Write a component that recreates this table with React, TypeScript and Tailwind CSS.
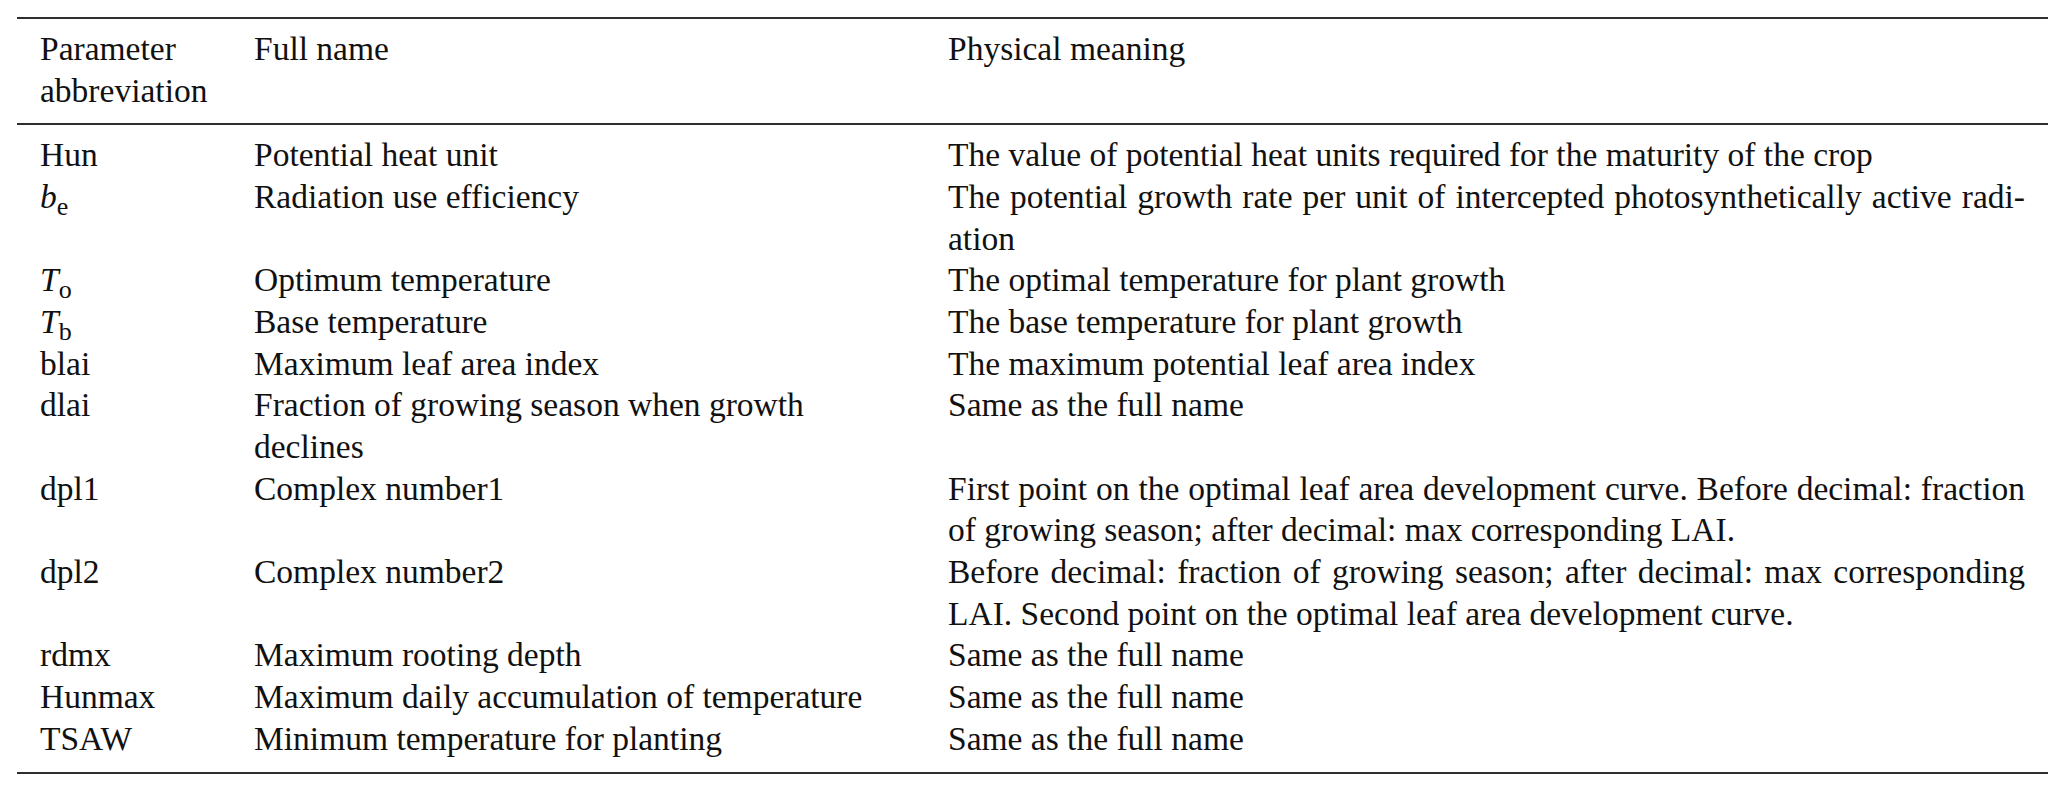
import React from 'react';

type Line = { text: React.ReactNode; justify?: boolean };

type Row = {
  abbr: React.ReactNode;
  name: Line[];
  meaning: Line[];
};

const Sub: React.FC<{ base: string; sub: string }> = ({ base, sub }) => (
  <span>
    <i>{base}</i>
    <span className="relative top-[7px] text-[26px] leading-none">{sub}</span>
  </span>
);

const rows: Row[] = [
  {
    abbr: 'Hun',
    name: [{ text: 'Potential heat unit' }],
    meaning: [{ text: 'The value of potential heat units required for the maturity of the crop' }]
  },
  {
    abbr: <Sub base="b" sub="e" />,
    name: [{ text: 'Radiation use efficiency' }],
    meaning: [
      { text: 'The potential growth rate per unit of intercepted photosynthetically active radi-', justify: true },
      { text: 'ation' }
    ]
  },
  {
    abbr: <Sub base="T" sub="o" />,
    name: [{ text: 'Optimum temperature' }],
    meaning: [{ text: 'The optimal temperature for plant growth' }]
  },
  {
    abbr: <Sub base="T" sub="b" />,
    name: [{ text: 'Base temperature' }],
    meaning: [{ text: 'The base temperature for plant growth' }]
  },
  {
    abbr: 'blai',
    name: [{ text: 'Maximum leaf area index' }],
    meaning: [{ text: 'The maximum potential leaf area index' }]
  },
  {
    abbr: 'dlai',
    name: [{ text: 'Fraction of growing season when growth' }, { text: 'declines' }],
    meaning: [{ text: 'Same as the full name' }]
  },
  {
    abbr: 'dpl1',
    name: [{ text: 'Complex number1' }],
    meaning: [
      { text: 'First point on the optimal leaf area development curve. Before decimal: fraction', justify: true },
      { text: 'of growing season; after decimal: max corresponding LAI.' }
    ]
  },
  {
    abbr: 'dpl2',
    name: [{ text: 'Complex number2' }],
    meaning: [
      { text: 'Before decimal: fraction of growing season; after decimal: max corresponding', justify: true },
      { text: 'LAI. Second point on the optimal leaf area development curve.' }
    ]
  },
  {
    abbr: 'rdmx',
    name: [{ text: 'Maximum rooting depth' }],
    meaning: [{ text: 'Same as the full name' }]
  },
  {
    abbr: 'Hunmax',
    name: [{ text: 'Maximum daily accumulation of temperature' }],
    meaning: [{ text: 'Same as the full name' }]
  },
  {
    abbr: 'TSAW',
    name: [{ text: 'Minimum temperature for planting' }],
    meaning: [{ text: 'Same as the full name' }]
  }
];

const Lines: React.FC<{ lines: Line[] }> = ({ lines }) => (
  <div>
    {lines.map((l, i) => (
      <div
        key={i}
        className={l.justify ? 'text-justify [text-align-last:justify] whitespace-nowrap' : 'whitespace-nowrap'}
      >
        {l.text}
      </div>
    ))}
  </div>
);

const Rule: React.FC = () => <div className="h-[2px] bg-[#2e2e2e]" />;

const App: React.FC = () => {
  return (
    <div className="min-h-screen bg-white pt-[17px] pl-[17px] text-[#111] font-['Liberation_Serif','Times_New_Roman',serif] text-[33.5px] leading-[41.66px]">
      <div className="w-[2031px]">
        <Rule />
        <div className="grid grid-cols-[214px_694px_1077px] pl-[23px] pt-[9px] pb-[12px]">
          <div>
            <div>Parameter</div>
            <div>abbreviation</div>
          </div>
          <div>Full name</div>
          <div>Physical meaning</div>
        </div>
        <Rule />
        <div className="pl-[23px] pt-[9px] pb-[13px]">
          {rows.map((r, i) => (
            <div key={i} className="grid grid-cols-[214px_694px_1077px]">
              <div className="whitespace-nowrap">{r.abbr}</div>
              <Lines lines={r.name} />
              <Lines lines={r.meaning} />
            </div>
          ))}
        </div>
        <Rule />
      </div>
    </div>
  );
};

export default App;
